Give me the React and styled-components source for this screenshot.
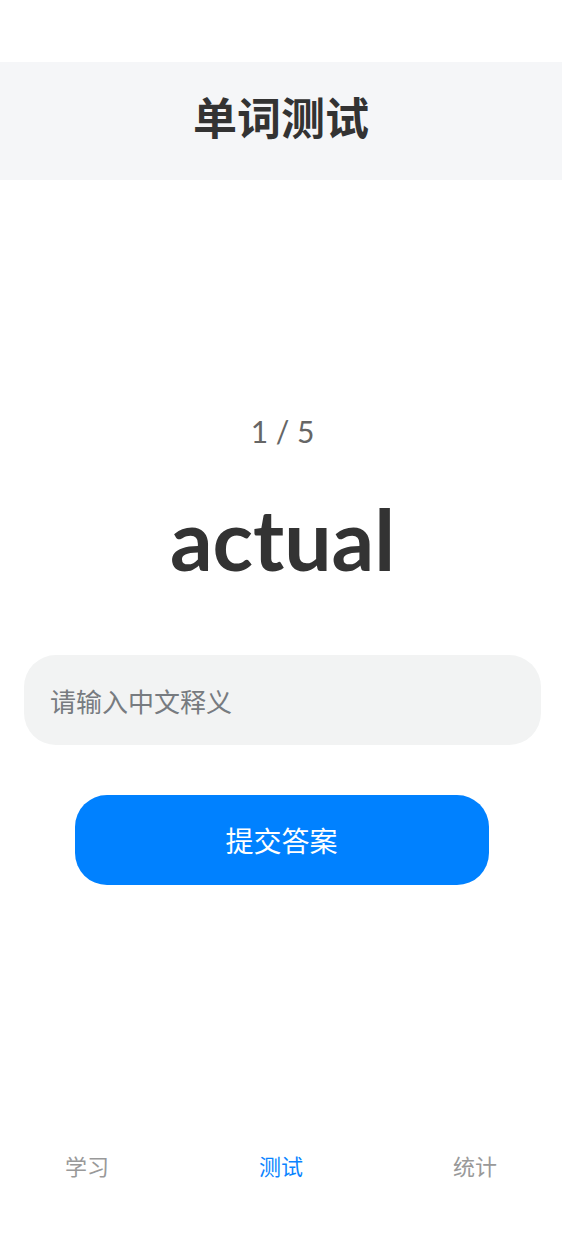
import React from "react";
import styled, { createGlobalStyle } from "styled-components";

const Global = createGlobalStyle`
  html, body { margin: 0; padding: 0; background: #ffffff; }
  body { font-family: "Noto Sans", "Noto Sans CJK SC", sans-serif; }
  * { box-sizing: border-box; }
`;

const Page = styled.div`
  width: 562px;
  height: 1234px;
  display: flex;
  flex-direction: column;
  background: #ffffff;
  overflow: hidden;
`;

const StatusSpace = styled.div`
  height: 62px;
  flex: none;
`;

const Header = styled.header`
  height: 118px;
  flex: none;
  background: #f5f6f8;
  display: flex;
  align-items: center;
  justify-content: center;
  padding-bottom: 10px;
`;

const Title = styled.h1`
  margin: 0;
  font-family: "Noto Sans CJK SC", sans-serif;
  font-size: 44px;
  font-weight: 700;
  color: #333333;
  line-height: 1;
`;

const Main = styled.main`
  flex: 1;
  display: flex;
  flex-direction: column;
  align-items: center;
  padding: 233px 21px 0 24px;
`;

const Counter = styled.div`
  font-family: "Lato", sans-serif;
  font-size: 30px;
  line-height: 36px;
  color: #666666;
`;

const Word = styled.div`
  margin-top: 40px;
  font-family: "Lato", sans-serif;
  font-weight: 700;
  font-size: 84px;
  line-height: 100px;
  color: #333333;
`;

const AnswerInput = styled.input`
  margin-top: 66px;
  width: 100%;
  height: 90px;
  border: none;
  outline: none;
  border-radius: 32px;
  background: #f2f3f3;
  padding: 0 26px;
  font-family: "Noto Sans CJK SC", sans-serif;
  font-size: 26px;
  color: #333;
  &::placeholder { color: #777b80; }
`;

const SubmitButton = styled.button`
  margin-top: 50px;
  width: 414px;
  height: 90px;
  border: none;
  border-radius: 32px;
  background: #0081ff;
  color: #ffffff;
  font-family: "Noto Sans CJK SC", sans-serif;
  font-size: 28px;
  cursor: pointer;
  margin-right: 2px;
`;

const TabBar = styled.nav`
  height: 114px;
  flex: none;
  display: grid;
  grid-template-columns: repeat(3, 194px);
  justify-content: center;
  align-items: start;
  padding-top: 30px;
`;

const Tab = styled.div`
  text-align: center;
  font-family: "Noto Sans CJK SC", sans-serif;
  font-size: 22px;
  line-height: 30px;
  color: ${(p) => (p.$active ? "#0a84ff" : "#999999")};
`;

export default function App() {
  return (
    <>
      <Global />
      <Page>
        <StatusSpace />
        <Header>
          <Title>单词测试</Title>
        </Header>
        <Main>
          <Counter>1 / 5</Counter>
          <Word>actual</Word>
          <AnswerInput placeholder="请输入中文释义" />
          <SubmitButton>提交答案</SubmitButton>
        </Main>
        <TabBar>
          <Tab>学习</Tab>
          <Tab $active>测试</Tab>
          <Tab>统计</Tab>
        </TabBar>
      </Page>
    </>
  );
}
